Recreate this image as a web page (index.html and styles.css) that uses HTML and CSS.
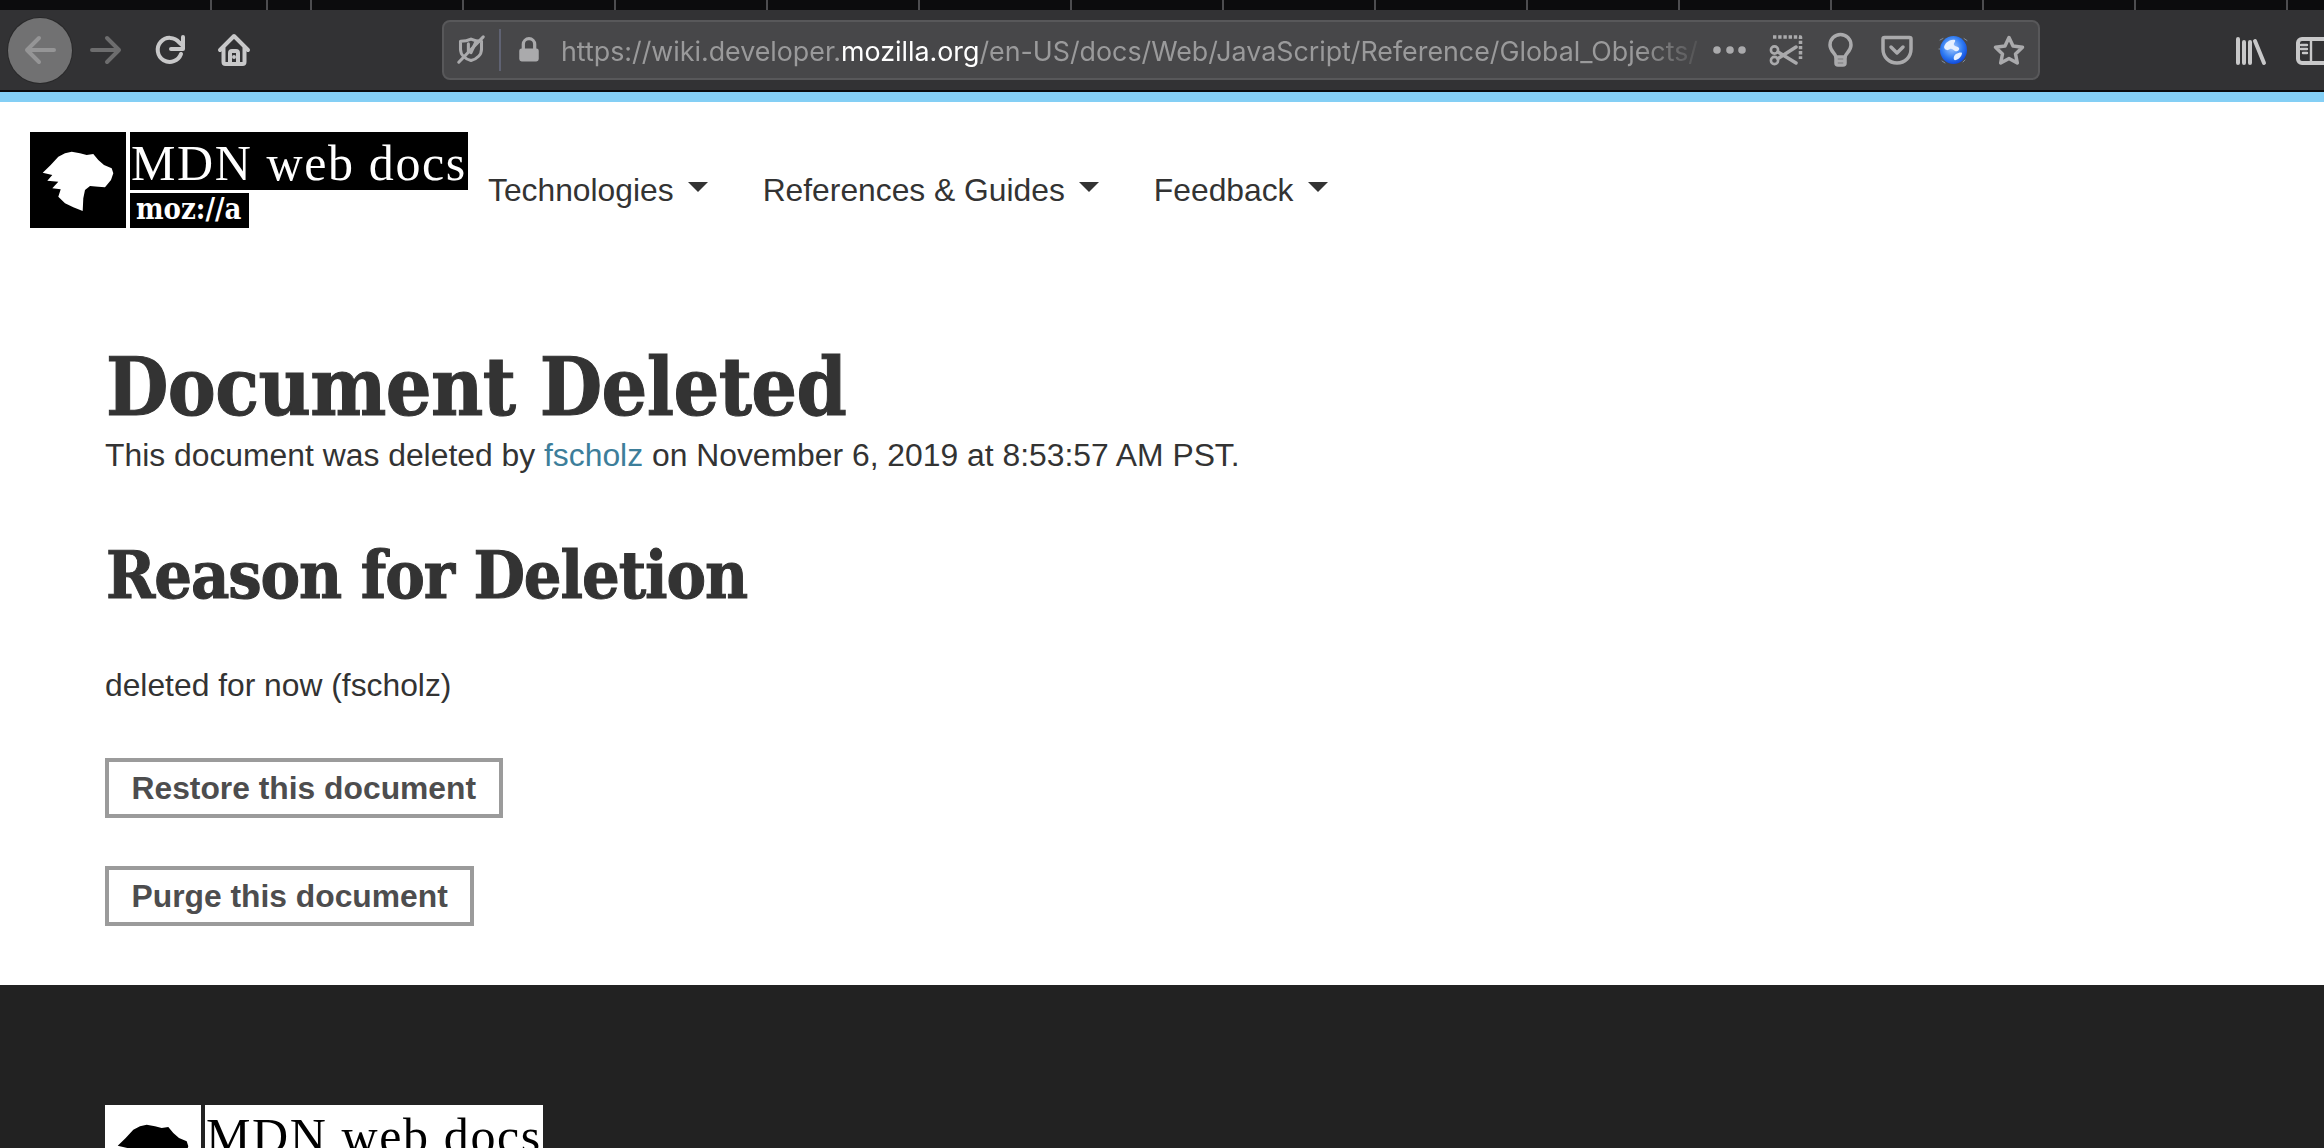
FILE: index.html
```html
<!DOCTYPE html>
<html lang="en">
<head>
<meta charset="utf-8">
<title>Document Deleted</title>
<link rel="stylesheet" href="styles.css">
</head>
<body>
<div class="tabs">
  <span class="tab tab-a"></span><span class="tab tab-b"></span><span class="tab tab-c"></span>
  <span class="tab"></span><span class="tab"></span><span class="tab"></span><span class="tab"></span><span class="tab"></span><span class="tab"></span><span class="tab"></span><span class="tab"></span><span class="tab"></span><span class="tab"></span><span class="tab"></span><span class="tab"></span><span class="tab"></span>
</div>
<div class="toolbar">
  <div class="back">
    <svg class="ico" viewBox="0 0 32 32"><path class="s-back" d="M30 16H3M15 4 3 16l12 12"/></svg>
  </div>
  <svg class="ico forward" viewBox="0 0 32 32"><path class="s-dim" d="M2 16h27M17 4l12 12-12 12"/></svg>
  <svg class="ico reload" viewBox="0 0 32 32"><path class="s-nav" d="M27 20a12 12 0 1 1-1.800-11.500L28 11"/><path class="s-nav" d="M29 3v12H17"/></svg>
  <svg class="ico home" viewBox="0 0 32 32"><path class="s-nav" d="M2 16 16 2l14 14"/><path class="s-nav" d="M5.500 14v14a2 2 0 0 0 2 2h17a2 2 0 0 0 2-2V14"/><path class="s-nav" d="M12 30V19a2 2 0 0 1 2-2h4a2 2 0 0 1 2 2v11"/><circle class="f-nav" cx="16" cy="23" r="2"/></svg>
  <div class="urlbar">
    <svg class="ico shield" viewBox="0 0 32 32"><path class="s-url" d="M16 3.500c-4 2-8 2.500-12 2.500v9c0 6 5 11 12 13 7-2 12-7 12-13V6c-4 0-8-.5-12-2.500z"/><path class="s-url" d="M13 9v9M21 8l-5 11"/><path class="s-url" d="M30 1 2 30"/></svg>
    <span class="divider"></span>
    <svg class="ico lock" viewBox="0 0 32 32"><path class="s-lock" d="M9 15V9a7 7 0 0 1 14 0v6"/><rect class="f-lock" x="4" y="14" width="24" height="16" rx="3"/></svg>
    <div class="url">https://wiki.developer.<b class="host">mozilla.org</b>/en-US/docs/Web/JavaScript/Reference/Global_Objects/</div>
    <div class="url-actions">
      <svg class="ico" viewBox="0 0 32 32"><circle class="f-url" cx="4" cy="16" r="3.800"/><circle class="f-url" cx="17" cy="16" r="3.800"/><circle class="f-url" cx="29" cy="16" r="3.800"/></svg>
      <svg class="ico" viewBox="0 0 32 32"><path class="s-dash" d="M4 3h27.500v22"/><circle class="s-thin" cx="5.500" cy="16" r="3.600"/><circle class="s-thin" cx="5.500" cy="26.500" r="3.600"/><path class="s-url" d="M9 18 27 29M9 24.500 27 13"/></svg>
      <svg class="ico" viewBox="0 0 32 32"><path class="s-url" d="M11 23c-1-4-6-6-6-12a10.500 10.500 0 0 1 21 0c0 6-5 8-6 12z"/><path class="s-url" d="M11 23v6a2 2 0 0 0 2 2h5a2 2 0 0 0 2-2v-6M11 27h9"/></svg>
      <svg class="ico" viewBox="0 0 32 32"><path class="s-url" d="M2 5a1.500 1.500 0 0 1 1.500-1.500h25A1.500 1.500 0 0 1 30 5v10c0 8-6 14-14 14S2 23 2 15z"/><path class="s-url" d="m10 13 6 6 6-6"/></svg>
      <svg class="ico" viewBox="0 0 32 32">
        <defs><radialGradient id="globe" cx="45%" cy="40%" r="65%"><stop offset="0" stop-color="#a9cdff"/><stop offset=".6" stop-color="#2f7bf2"/><stop offset="1" stop-color="#0a3fd6"/></radialGradient></defs>
        <ellipse cx="16.500" cy="16" rx="13.500" ry="14" fill="url(#globe)"/>
        <path class="f-white" d="M9 9c3-3 7-4 9-3 1 2-2 3-1 5s4 1 5 3-2 4-4 3-3-3-5-2-3 2-5 0 0-4 1-6zM19 20c2-1 5-2 6-1 0 3-3 6-6 7s-3-4 0-6z"/>
        <path class="s-corner" d="M6 4.500 3 6M27 4.500l3 2M5 27l3 2M26 28l2-2M2 15h1"/>
      </svg>
      <svg class="ico" viewBox="0 0 32 32"><path class="s-url" d="M16 3.500 20 12l9.500 1.300-7 6.600L24.300 29 16 24.500 7.700 29l1.800-9.100-7-6.600L12 12z"/></svg>
    </div>
  </div>
  <svg class="ico library" viewBox="0 0 32 32"><path class="s-nav" d="M4 5v24M10 8v21M16 8v21M21 7l9 22"/></svg>
  <svg class="ico sidebar" viewBox="0 0 40 32"><rect class="s-nav" x="2" y="5" width="50" height="24" rx="4"/><path class="s-thin2" d="M15 5v24"/><path class="s-thin2" d="M5 11h6M5 15h6M7 19h4"/></svg>
</div>
<div class="loadbar"></div>

<header class="site-head">
  <a class="logo" href="#">
    <span class="logo-mark">
      <svg class="dino" viewBox="0 0 96 96"><path d="M12.700 40.700 20.700 33 28.300 24.700 35 21.300 41.700 19.700 50 21.300 56.700 23 63.300 22 68.300 28 74 33 81.700 36.300 83.300 41.300 81 48 75 55.300 68.300 54.700 60 54 55 58 53.300 66.300 52.700 79 43.300 75.300 35 71.300 28.300 64.700 30.700 57.300 22.300 56.300 28.300 49.700 17.300 48.700 22.300 43z"/></svg>
    </span>
    <span class="logo-text">
      <span class="logo-word">MDN web docs</span>
      <span class="logo-moz">moz://a</span>
    </span>
  </a>
  <nav class="nav">
    <a class="nav-item" href="#">Technologies<i class="caret"></i></a>
    <a class="nav-item" href="#">References &amp; Guides<i class="caret"></i></a>
    <a class="nav-item" href="#">Feedback<i class="caret"></i></a>
  </nav>
</header>

<main class="content">
  <h1 class="title">Document Deleted</h1>
  <p class="byline">This document was deleted by <a class="link" href="#">fscholz</a> on November 6, 2019 at 8:53:57 AM PST.</p>
  <h2 class="subtitle">Reason for Deletion</h2>
  <p class="reason">deleted for now (fscholz)</p>
  <a class="btn" href="#">Restore this document</a>
  <a class="btn" href="#">Purge this document</a>
</main>

<footer class="site-foot">
  <a class="logo logo-inv" href="#">
    <span class="logo-mark">
      <svg class="dino" viewBox="0 0 96 96"><path d="M12.700 40.700 20.700 33 28.300 24.700 35 21.300 41.700 19.700 50 21.300 56.700 23 63.300 22 68.300 28 74 33 81.700 36.300 83.300 41.300 81 48 75 55.300 68.300 54.700 60 54 55 58 53.300 66.300 52.700 79 43.300 75.300 35 71.300 28.300 64.700 30.700 57.300 22.300 56.300 28.300 49.700 17.300 48.700 22.300 43z"/></svg>
    </span>
    <span class="logo-text">
      <span class="logo-word">MDN web docs</span>
      <span class="logo-moz">moz://a</span>
    </span>
  </a>
</footer>
</body>
</html>
```
FILE: styles.css
```css
* { box-sizing: border-box; }
html, body { margin: 0; height: 100%; overflow: hidden; background: #fff; }
body { font-family: "Liberation Sans", Arial, sans-serif; color: #333; width: 2324px; }
a { text-decoration: none; color: inherit; }

/* browser chrome */
.tabs { display: flex; height: 10px; background: #0c0c0d; }
.tab { flex: none; width: 152px; border-right: 2px solid #4d4d4f; }
.tab-a { width: 212px; }
.tab-b { width: 56px; }
.tab-c { width: 44px; }

.toolbar { display: flex; align-items: center; height: 80px; padding-left: 8px; background: #323234; overflow: hidden; }
.ico { flex: none; display: block; width: 32px; height: 32px; overflow: visible; fill: none; }
.back { flex: none; display: flex; align-items: center; justify-content: center; width: 64px; height: 65px; border-radius: 50%; background: #717172; box-shadow: 0 0 0 1px #29292a; }
.forward { margin-left: 18px; }
.reload { margin-left: 32px; }
.home { margin-left: 32px; }
.urlbar { flex: none; display: flex; align-items: center; width: 1598px; height: 60px; margin-left: 192px; border: 2px solid #58585a; border-radius: 8px; background: #474749; }
.shield { margin-left: 13px; width: 28px; height: 28px; }
.divider { flex: none; width: 2px; height: 42px; margin-left: 14px; background: #5f6272; }
.lock { margin-left: 15px; width: 26px; height: 28px; }
.url { flex: none; width: 1146px; margin-left: 19px; padding-top: 2px; font-family: Inter, "Noto Sans", sans-serif; font-size: 26.800px; line-height: 40px; color: #9a9a9b; white-space: nowrap; overflow: hidden; -webkit-mask-image: linear-gradient(to right, #000 94%, transparent 100%); mask-image: linear-gradient(to right, #000 94%, transparent 100%); }
.host { font-weight: 400; color: #fff; }
.url-actions { display: flex; align-items: center; gap: 24px; margin-left: 6px; }
.library { margin-left: 194px; }
.sidebar { margin-left: 30px; width: 40px; }

.s-back, .s-dim, .s-nav, .s-url, .s-lock, .s-thin, .s-thin2, .s-dash, .s-corner { fill: none; stroke-linecap: round; stroke-linejoin: round; }
.s-back { stroke: #959596; stroke-width: 4; }
.s-dim { stroke: #6d6d6e; stroke-width: 4; }
.s-nav { stroke: #c8c8c9; stroke-width: 4; }
.s-url { stroke: #aaaaac; stroke-width: 3.500; }
.s-lock { stroke: #aaaaac; stroke-width: 4; }
.s-thin { stroke: #aaaaac; stroke-width: 2.600; }
.s-thin2 { stroke: #c8c8c9; stroke-width: 2.400; }
.s-dash { stroke: #aaaaac; stroke-width: 3.500; stroke-linecap: butt; stroke-dasharray: 3.400 1.800; }
.s-corner { stroke: #7f8c9c; stroke-width: 1; }
.f-nav { fill: #c8c8c9; }
.f-url { fill: #aaaaac; }
.f-lock { fill: #aaaaac; }
.f-white { fill: #e6f0ff; }

.loadbar { height: 12px; background: #84cff5; border-top: 2px solid #0c0c0d; }

/* site header */
.site-head { display: flex; align-items: flex-start; height: 210px; padding: 30px 0 0 30px; }
.logo { flex: none; display: flex; width: 438px; height: 96px; color: #fff; }
.logo-mark { flex: none; width: 96px; height: 96px; background: #000; }
.dino { display: block; width: 96px; height: 96px; fill: #fff; }
.logo-text { display: flex; flex-direction: column; align-items: flex-start; margin-left: 4px; }
.logo-word { width: 338px; height: 58px; background: #000; font-family: "Liberation Serif", serif; font-size: 50px; line-height: 62px; letter-spacing: 1.600px; padding-left: 1px; white-space: nowrap; overflow: hidden; }
.logo-moz { width: 119px; height: 35px; margin-top: 3px; background: #000; font-family: "DejaVu Serif", serif; font-stretch: condensed; font-weight: 700; font-size: 29px; line-height: 33px; padding-left: 6px; white-space: nowrap; }
.logo-inv { color: #000; }
.logo-inv .logo-mark, .logo-inv .logo-word, .logo-inv .logo-moz { background: #fff; }
.logo-inv .dino { fill: #000; }

.nav { display: flex; margin-left: 20px; padding-top: 40px; font-size: 31.800px; line-height: 36px; color: #333; }
.nav-item { display: flex; margin-right: 55px; white-space: nowrap; }
.caret { flex: none; width: 0; height: 0; margin: 10px 0 0 14px; border-style: solid; border-width: 10px 10px 0; border-color: #333 transparent transparent; }

/* content */
.content { height: 673px; padding: 30px 0 0 105px; }
.title { margin: 0; padding-left: 1px; font-family: "DejaVu Serif", serif; font-stretch: condensed; font-weight: 700; font-size: 80px; line-height: 90px; letter-spacing: -.6px; -webkit-text-stroke: 1px #333; white-space: nowrap; }
.byline { margin: 3px 0 0; font-size: 31.850px; line-height: 40px; }
.link { color: #3d7e9a; }
.subtitle { margin: 60px 0 0; padding-left: 1px; font-family: "DejaVu Serif", serif; font-stretch: condensed; font-weight: 700; font-size: 66px; line-height: 80px; letter-spacing: -1.100px; -webkit-text-stroke: 1px #333; white-space: nowrap; }
.reason { margin: 50px 0 0; padding-bottom: 5px; font-size: 31.800px; line-height: 40px; }
.btn { display: block; width: fit-content; height: 60px; margin-top: 48px; padding: 0 22.500px; border: 4px solid #9b9b9b; font-size: 31.800px; font-weight: 700; line-height: 52px; color: #4d4d4e; white-space: nowrap; }

/* footer */
.site-foot { height: 163px; padding: 120px 0 0 105px; background: #222; overflow: hidden; }
```
